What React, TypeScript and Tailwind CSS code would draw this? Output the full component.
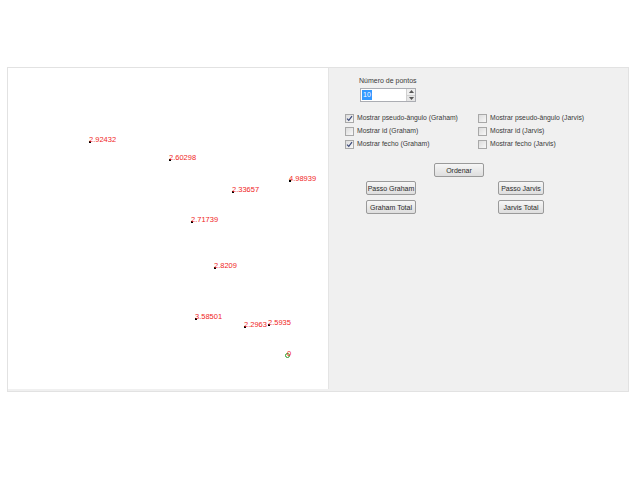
import React from 'react';

type Pt = { x: number; y: number; label: string; first?: boolean };

// coordenadas relativas ao canvas (320x320)
const POINTS: Pt[] = [
  { x: 81, y: 73, label: '2.92432' },
  { x: 161, y: 91, label: '2.60298' },
  { x: 281, y: 112, label: '4.98939' },
  { x: 224, y: 123, label: '2.33657' },
  { x: 183, y: 153, label: '2.71739' },
  { x: 206, y: 199, label: '2.8209' },
  { x: 187, y: 250, label: '3.58501' },
  { x: 236, y: 258, label: '2.2963' },
  { x: 260, y: 256, label: '2.5935' },
  { x: 279, y: 287, label: '0', first: true },
];

const font = { fontFamily: '"Liberation Sans", Arial, sans-serif' };

const Check: React.FC<{ checked?: boolean; label: string }> = ({ checked, label }) => (
  <div className="flex items-center h-[13px] gap-[3px]">
    <div className="w-[9px] h-[9px] border border-[#a8a8a8] bg-gradient-to-br from-[#dcdcdc] to-[#f8f8f8] flex items-center justify-center">
      {checked && (
        <svg width="7" height="7" viewBox="0 0 7 7">
          <path d="M1 3.6 L2.8 5.4 L6 1.2" fill="none" stroke="#3c4a78" strokeWidth="1.2" />
        </svg>
      )}
    </div>
    <span className="text-[6.8px] text-[#3a3a3a] whitespace-nowrap leading-none">{label}</span>
  </div>
);

const Btn: React.FC<{ label: string; w: number }> = ({ label, w }) => (
  <div
    style={{ width: w }}
    className="h-[14px] border border-[#9a9a9a] rounded-[2px] bg-gradient-to-b from-[#f6f6f6] to-[#dedede] flex items-center justify-center text-[7px] text-[#2a2a2a] leading-none"
  >
    {label}
  </div>
);

const App: React.FC = () => {
  return (
    <div className="w-[640px] h-[480px] bg-white pt-[67px] pl-[7px]" style={font}>
      <div className="w-[622px] h-[325px] border border-[#e2e2e2] bg-[#f0f0f0] flex">
        {/* área de desenho */}
        <div className="relative w-[321px] h-[321px] bg-white border-r border-[#e4e4e4] shrink-0">
          {POINTS.map((p) => (
            <React.Fragment key={p.label}>
              {p.first ? (
                <div
                  className="absolute w-[5px] h-[5px] rounded-full border border-[#2a9a2a]"
                  style={{ left: p.x - 2, top: p.y - 2 }}
                />
              ) : (
                <div className="absolute w-[2px] h-[2px] bg-black" style={{ left: p.x, top: p.y }} />
              )}
              <span
                className="absolute text-[7.5px] leading-none text-[#f01e1e] whitespace-nowrap"
                style={{ left: p.x, top: p.y - 5 }}
              >
                {p.label}
              </span>
            </React.Fragment>
          ))}
        </div>

        {/* painel de controles */}
        <div className="flex-1 flex flex-col">
          <div className="pl-[30px] pt-[8px] text-[7px] text-[#3a3a3a] leading-[10px]">Número de pontos</div>
          <div className="ml-[31px] mt-[2px] w-[56px] h-[14px] bg-white border border-[#abadb3] flex">
            <div className="flex-1 flex items-center pl-[1px]">
              <span className="bg-[#3399ff] text-white text-[7px] leading-[10px] px-[1px]">10</span>
            </div>
            <div className="w-[9px] flex flex-col border-l border-[#d0d0d0]">
              <div className="flex-1 flex items-center justify-center bg-[#eeeeee] border-b border-[#d0d0d0]">
                <svg width="5" height="3" viewBox="0 0 5 3"><path d="M0 3 L2.5 0 L5 3Z" fill="#555" /></svg>
              </div>
              <div className="flex-1 flex items-center justify-center bg-[#e6e6e6]">
                <svg width="5" height="3" viewBox="0 0 5 3"><path d="M0 0 L2.5 3 L5 0Z" fill="#555" /></svg>
              </div>
            </div>
          </div>

          <div className="flex mt-[10px] pl-[16px]">
            <div className="w-[133px] flex flex-col">
              <Check checked label="Mostrar pseudo-ângulo (Graham)" />
              <Check label="Mostrar id (Graham)" />
              <Check checked label="Mostrar fecho (Graham)" />
            </div>
            <div className="flex flex-col">
              <Check label="Mostrar pseudo-ângulo (Jarvis)" />
              <Check label="Mostrar id (Jarvis)" />
              <Check label="Mostrar fecho (Jarvis)" />
            </div>
          </div>

          <div className="ml-[105px] mt-[12px]">
            <Btn label="Ordenar" w={50} />
          </div>

          <div className="flex justify-between pl-[37px] pr-[84px] mt-[4px]">
            <Btn label="Passo Graham" w={50} />
            <Btn label="Passo Jarvis" w={46} />
          </div>
          <div className="flex justify-between pl-[37px] pr-[84px] mt-[5px]">
            <Btn label="Graham Total" w={50} />
            <Btn label="Jarvis Total" w={46} />
          </div>
        </div>
      </div>
    </div>
  );
};

export default App;
